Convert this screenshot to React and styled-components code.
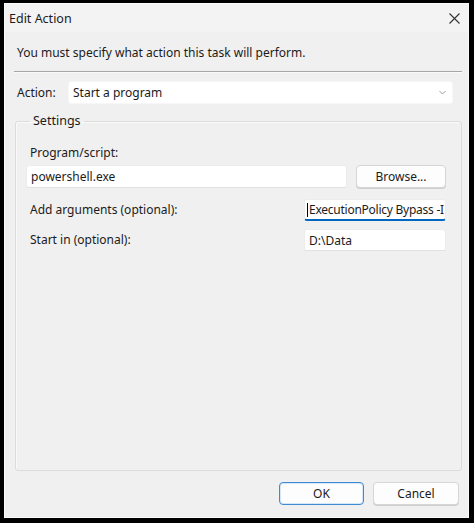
import React from "react";
import styled, { createGlobalStyle } from "styled-components";

const GlobalStyle = createGlobalStyle`
  html, body {
    margin: 0;
    padding: 0;
    background: #000;
  }
  * {
    box-sizing: border-box;
  }
`;

const Frame = styled.div`
  width: 474px;
  height: 523px;
  padding: 3px 5px 5px 4px;
  background: #000;
`;

const Window = styled.div`
  height: 100%;
  display: flex;
  flex-direction: column;
  background: #f0f0f0;
  border: 1px solid #fbfbfb;
  font-family: "Noto Sans", "Open Sans", sans-serif;
  font-size: 12px;
  color: #1b1b1b;
`;

const TitleBar = styled.div`
  height: 28px;
  display: flex;
  align-items: center;
  justify-content: space-between;
  padding: 0 8px 0 4px;
  background: #f3f3f3;
`;

const Title = styled.span`
  font-size: 12.5px;
`;

const CloseIcon = styled.svg`
  width: 11px;
  height: 11px;
  stroke: #333;
  stroke-width: 1.1;
`;

const Content = styled.div`
  flex: 1;
  display: flex;
  flex-direction: column;
  padding: 0 6px 0 9px;
`;

const Instruction = styled.div`
  padding: 13px 0 10px 3px;
  line-height: 16px;
`;

const Separator = styled.hr`
  margin: 0;
  border: none;
  border-top: 1px solid #a6a6a6;
  border-bottom: 1px solid #fafafa;
`;

const ActionRow = styled.div`
  display: flex;
  align-items: center;
  margin-top: 8px;
  padding: 0 9px 0 3px;
`;

const ActionLabel = styled.span`
  width: 51px;
`;

const Combo = styled.div`
  flex: 1;
  height: 23px;
  display: flex;
  align-items: center;
  justify-content: space-between;
  padding: 0 6px 0 4px;
  background: #fff;
  border-radius: 3px;
  border: 1px solid #f7f7f7;
`;

const Chevron = styled.svg`
  width: 7px;
  height: 5px;
  fill: none;
  stroke: #9a9a9a;
  stroke-width: 1;
`;

const Group = styled.fieldset`
  flex: 1;
  margin: 9px 0 11px 1px;
  padding: 16px 15px 0 10px;
  border: 1px solid #dcdcdc;
  border-radius: 3px;
  box-shadow: inset 1px 1px 0 #fafafa;
  display: flex;
  flex-direction: column;
  min-width: 0;
`;

const Legend = styled.legend`
  padding: 0 3px;
  margin-left: 4px;
  line-height: 16px;
  font-size: 12.5px;
`;

const FieldLabel = styled.div`
  line-height: 16px;
  padding-left: 4px;
`;

const ProgramRow = styled.div`
  display: flex;
  gap: 9px;
  margin-top: 4px;
`;

const TextBox = styled.div`
  flex: ${({ $grow }) => ($grow ? 1 : "none")};
  width: ${({ $width }) => ($width ? `${$width}px` : "auto")};
  height: ${({ $h }) => $h || 23}px;
  display: flex;
  align-items: center;
  padding: ${({ $tight }) => ($tight ? "0 2px" : "0 4px")};
  letter-spacing: ${({ $tight }) => ($tight ? "-0.25px" : "normal")};
  background: #fff;
  border: 1px solid #ececec;
  border-bottom-color: ${({ $focused }) => ($focused ? "#0067c0" : "#e2e2e2")};
  border-bottom-width: ${({ $focused }) => ($focused ? 2 : 1)}px;
  border-radius: 3px;
  white-space: nowrap;
  overflow: hidden;
`;

const Caret = styled.span`
  display: inline-block;
  flex: none;
  width: 1px;
  height: 14px;
  margin-right: 1px;
  background: #000;
`;

const Button = styled.button`
  width: ${({ $width }) => $width}px;
  height: 23px;
  padding: 0;
  font: inherit;
  color: #1b1b1b;
  background: #fdfdfd;
  border: 1px solid ${({ $primary }) => ($primary ? "#3f8bd3" : "#d6d6d6")};
  box-shadow: ${({ $primary }) =>
    $primary ? "inset 0 0 0 1px #d4e6f7" : "0 1px 0 #cfcfcf"};
  border-radius: 4px;
`;

const OptionRow = styled.div`
  display: flex;
  align-items: center;
  justify-content: space-between;
  margin-top: ${({ $gap }) => $gap}px;
`;

const Footer = styled.div`
  display: flex;
  justify-content: flex-end;
  gap: 9px;
  padding: 0 3px 12px 0;
`;

export default function App() {
  return (
    <>
      <GlobalStyle />
      <Frame>
        <Window>
          <TitleBar>
            <Title>Edit Action</Title>
            <CloseIcon viewBox="0 0 11 11">
              <path d="M0.5 0.5 L10.5 10.5 M10.5 0.5 L0.5 10.5" />
            </CloseIcon>
          </TitleBar>
          <Content>
            <Instruction>You must specify what action this task will perform.</Instruction>
            <Separator />
            <ActionRow>
              <ActionLabel>Action:</ActionLabel>
              <Combo>
                <span>Start a program</span>
                <Chevron viewBox="0 0 7 5">
                  <path d="M0.5 1 L3.5 4 L6.5 1" />
                </Chevron>
              </Combo>
            </ActionRow>
            <Group>
              <Legend>Settings</Legend>
              <FieldLabel>Program/script:</FieldLabel>
              <ProgramRow>
                <TextBox $grow>powershell.exe</TextBox>
                <Button type="button" $width={90}>
                  Browse...
                </Button>
              </ProgramRow>
              <OptionRow $gap={11}>
                <FieldLabel>Add arguments (optional):</FieldLabel>
                <TextBox $width={142} $h={22} $focused $tight>
                  <Caret />
                  ExecutionPolicy Bypass -I
                </TextBox>
              </OptionRow>
              <OptionRow $gap={8}>
                <FieldLabel>Start in (optional):</FieldLabel>
                <TextBox $width={142} $h={22}>
                  D:\Data
                </TextBox>
              </OptionRow>
            </Group>
            <Footer>
              <Button type="button" $width={85} $primary>
                OK
              </Button>
              <Button type="button" $width={86}>
                Cancel
              </Button>
            </Footer>
          </Content>
        </Window>
      </Frame>
    </>
  );
}
